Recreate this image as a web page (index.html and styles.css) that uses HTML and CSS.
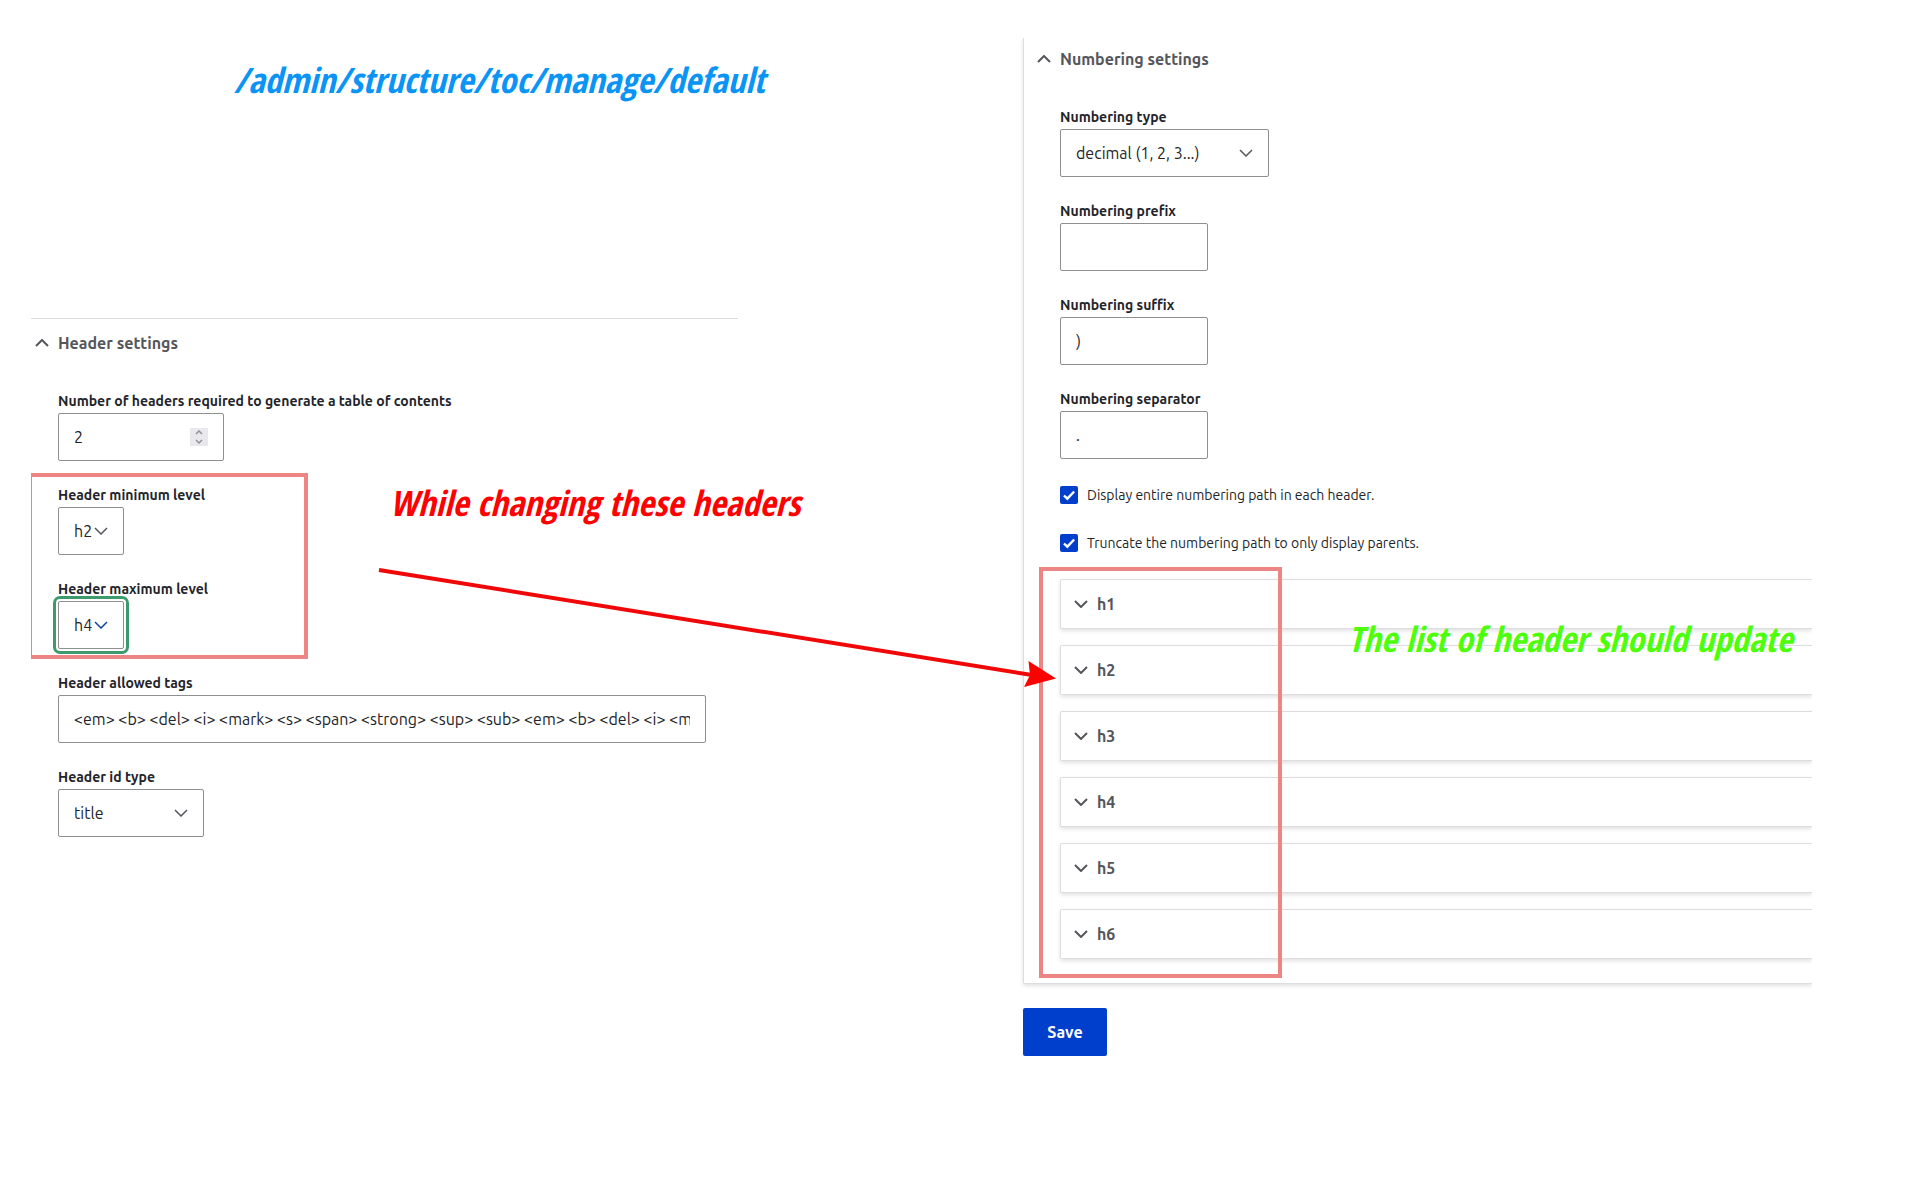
FILE: index.html
```html
<!DOCTYPE html>
<html lang="en">
<head>
<meta charset="utf-8">
<meta name="viewport" content="width=device-width, initial-scale=1">
<title>Table of contents settings</title>
<link rel="stylesheet" href="styles.css">
</head>
<body>
<main class="page">
  <section class="column">
    <h1 class="note note-path">/admin/structure/toc/manage/default</h1>
    <details class="panel panel-left" open>
      <summary class="panel-title">
        <svg class="chevron" viewBox="0 0 14 8" aria-hidden="true"><path d="M1 7l6-6 6 6"/></svg>
        Header settings
      </summary>
      <div class="fields">
        <div class="field">
          <label for="count">Number of headers required to generate a table of contents</label>
          <div class="number">
            <input id="count" class="control" type="number" value="2">
            <svg class="spinner" viewBox="0 0 18 18" aria-hidden="true"><path d="M6 6l3-3 3 3M6 12l3 3 3-3"/></svg>
          </div>
        </div>
        <div class="fields marked">
          <div class="field">
            <label for="min">Header minimum level</label>
            <select id="min" class="control select select-level"><option>h2</option></select>
          </div>
          <div class="field">
            <label for="max">Header maximum level</label>
            <select id="max" class="control select select-level is-focused"><option>h4</option></select>
          </div>
          <div class="frame frame-levels"></div>
          <p class="note note-change">While changing these headers</p>
        </div>
        <div class="field">
          <label for="tags">Header allowed tags</label>
          <input id="tags" class="control control-wide" type="text" value="&lt;em&gt; &lt;b&gt; &lt;del&gt; &lt;i&gt; &lt;mark&gt; &lt;s&gt; &lt;span&gt; &lt;strong&gt; &lt;sup&gt; &lt;sub&gt; &lt;em&gt; &lt;b&gt; &lt;del&gt; &lt;i&gt; &lt;mark&gt; &lt;s&gt; &lt;span&gt; &lt;strong&gt; &lt;sup&gt; &lt;sub&gt;">
        </div>
        <div class="field">
          <label for="idtype">Header id type</label>
          <select id="idtype" class="control select select-id"><option>title</option></select>
        </div>
      </div>
    </details>
  </section>

  <section class="column">
    <details class="panel panel-right" open>
      <summary class="panel-title">
        <svg class="chevron" viewBox="0 0 14 8" aria-hidden="true"><path d="M1 7l6-6 6 6"/></svg>
        Numbering settings
      </summary>
      <div class="fields">
        <div class="field">
          <label for="type">Numbering type</label>
          <select id="type" class="control select select-type"><option>decimal (1, 2, 3...)</option></select>
        </div>
        <div class="field">
          <label for="prefix">Numbering prefix</label>
          <input id="prefix" class="control control-short" type="text">
        </div>
        <div class="field">
          <label for="suffix">Numbering suffix</label>
          <input id="suffix" class="control control-short" type="text" value=")">
        </div>
        <div class="field">
          <label for="separator">Numbering separator</label>
          <input id="separator" class="control control-short" type="text" value=".">
        </div>
        <div class="check">
          <input id="entire" type="checkbox" checked>
          <label for="entire">Display entire numbering path in each header.</label>
        </div>
        <div class="check">
          <input id="truncate" type="checkbox" checked>
          <label for="truncate">Truncate the numbering path to only display parents.</label>
        </div>
        <div class="headers marked">
          <details class="header"><summary><svg class="chevron" viewBox="0 0 14 8" aria-hidden="true"><path d="M1 1l6 6 6-6"/></svg>h1</summary></details>
          <details class="header"><summary><svg class="chevron" viewBox="0 0 14 8" aria-hidden="true"><path d="M1 1l6 6 6-6"/></svg>h2</summary></details>
          <details class="header"><summary><svg class="chevron" viewBox="0 0 14 8" aria-hidden="true"><path d="M1 1l6 6 6-6"/></svg>h3</summary></details>
          <details class="header"><summary><svg class="chevron" viewBox="0 0 14 8" aria-hidden="true"><path d="M1 1l6 6 6-6"/></svg>h4</summary></details>
          <details class="header"><summary><svg class="chevron" viewBox="0 0 14 8" aria-hidden="true"><path d="M1 1l6 6 6-6"/></svg>h5</summary></details>
          <details class="header"><summary><svg class="chevron" viewBox="0 0 14 8" aria-hidden="true"><path d="M1 1l6 6 6-6"/></svg>h6</summary></details>
          <div class="frame frame-headers"></div>
          <p class="note note-update">The list of header should update</p>
        </div>
      </div>
    </details>
    <button class="save" type="button">Save</button>
  </section>

  <svg class="arrow" viewBox="0 0 680 124" aria-hidden="true">
    <path class="arrow-line" d="M1 6L654 111"/>
    <path class="arrow-head" d="M678 114.500L650.500 97L652 111L646 123Z"/>
  </svg>
</main>
</body>
</html>
```
FILE: styles.css
```css
* {
  box-sizing: border-box;
}

body {
  margin: 0;
  background: #fff;
  color: #232429;
  font: 16px/24px Ubuntu, "Noto Sans", sans-serif;
}

.page {
  position: relative;
  display: grid;
  grid-template-columns: 707fr 789fr;
  column-gap: 285px;
  align-items: start;
  padding: 38px 108px 38px 31px;
}

.column {
  min-width: 0;
}

/* Panels */
.panel-left {
  border-top: 1px solid #dcdde0;
}

.panel-left > .fields {
  padding: 24px 32px 0 27px;
}

.panel-right {
  border: solid #dcdde0;
  border-width: 0 0 1px 1px;
  border-radius: 0 0 0 2px;
  box-shadow: 0 2px 4px rgba(0, 0, 0, 0.12);
  clip-path: inset(0 0 -8px -4px);
}

.panel-right > .fields {
  padding: 27px 0 24px 36px;
}

.panel-title,
.header summary {
  display: flex;
  align-items: center;
  gap: 9px;
  height: 48px;
  color: #55565b;
  font-weight: 700;
  list-style: none;
  cursor: pointer;
}

.panel-title {
  padding-left: 4px;
}

.panel-right .panel-title {
  height: 42px;
  padding-left: 13px;
}

.chevron {
  width: 14px;
  height: 8px;
  fill: none;
  stroke: #55565b;
  stroke-width: 2;
}

/* Form fields */
.fields {
  display: flex;
  flex-direction: column;
  gap: 24px;
}

.field {
  display: flex;
  flex-direction: column;
  align-items: flex-start;
  gap: 2px;
}

.field label {
  font-size: 14px;
  font-weight: 700;
  line-height: 20px;
}

.control {
  height: 48px;
  margin: 0;
  padding: 0 15px;
  border: 1px solid #8e8f93;
  border-radius: 2px;
  background: #fff;
  color: #232429;
  font: inherit;
  appearance: none;
}

.control-wide {
  width: 100%;
}

.control-short {
  width: 148px;
}

.number {
  position: relative;
  width: 166px;
}

.number .control {
  width: 100%;
  appearance: textfield;
}

.number .control::-webkit-inner-spin-button {
  display: none;
}

.spinner {
  position: absolute;
  top: 15px;
  right: 16px;
  width: 18px;
  height: 18px;
  background: #e9e9ed;
  fill: none;
  stroke: #8f8f9d;
  stroke-width: 1.5;
}

.select {
  background: #fff url("data:image/svg+xml,%3Csvg xmlns='http://www.w3.org/2000/svg' width='14' height='8' fill='none' stroke='%2355565b' stroke-width='1.5'%3E%3Cpath d='M1 1l6 6 6-6'/%3E%3C/svg%3E") no-repeat right 15px center;
}

.select-level {
  width: 66px;
}

.select-id {
  width: 146px;
}

.select-type {
  width: 209px;
}

.is-focused {
  outline: 3px solid #3d9a6d;
  outline-offset: 2px;
  background-image: url("data:image/svg+xml,%3Csvg xmlns='http://www.w3.org/2000/svg' width='14' height='8' fill='none' stroke='%23114499' stroke-width='1.5'%3E%3Cpath d='M1 1l6 6 6-6'/%3E%3C/svg%3E");
}

.check {
  display: flex;
  align-items: center;
  gap: 9px;
  font-size: 14px;
}

.check input {
  width: 18px;
  height: 18px;
  margin: 0;
  border-radius: 2px;
  background: #003ecc url("data:image/svg+xml,%3Csvg xmlns='http://www.w3.org/2000/svg' width='18' height='18' fill='none' stroke='white' stroke-width='2.400'%3E%3Cpath d='M4 9.500l3.300 3.200L14.200 5.500'/%3E%3C/svg%3E") center no-repeat;
  appearance: none;
}

/* Header list */
.headers {
  display: flex;
  flex-direction: column;
  gap: 16px;
}

.header {
  border: solid #dcdde0;
  border-width: 1px 0 1px 1px;
  border-radius: 2px 0 0 2px;
  box-shadow: 0 2px 4px rgba(0, 0, 0, 0.12);
}

.header summary {
  padding-left: 13px;
}

.save {
  display: block;
  width: 84px;
  height: 48px;
  margin-top: 24px;
  border: 0;
  border-radius: 2px;
  background: #003ecc;
  color: #fff;
  font: inherit;
  font-weight: 700;
}

/* Annotations laid over the form */
.marked {
  position: relative;
}

.frame {
  position: absolute;
  border: 4px solid #ee8585;
  pointer-events: none;
}

.frame-levels {
  inset: -12px auto -10px -27px;
  width: 277px;
  border-left-width: 1px;
}

.frame-headers {
  inset: -12px auto -19px -21px;
  width: 243px;
}

.note {
  margin: 0;
  font: italic 700 35px/48px "Open Sans Condensed", "Roboto Condensed", sans-serif;
  white-space: nowrap;
}

.note-path {
  margin: 18px 0 214px;
  padding-left: 203px;
  color: #0a94f5;
}

.note-change {
  position: absolute;
  top: -6px;
  left: 332px;
  color: #f00;
}

.note-update {
  position: absolute;
  top: 36px;
  left: 288px;
  color: #4dff0a;
}

.arrow {
  position: absolute;
  top: 564px;
  left: 378px;
  width: 680px;
  height: 124px;
  pointer-events: none;
}

.arrow-line {
  stroke: #f00808;
  stroke-width: 4;
}

.arrow-head {
  fill: #f00;
}
```
